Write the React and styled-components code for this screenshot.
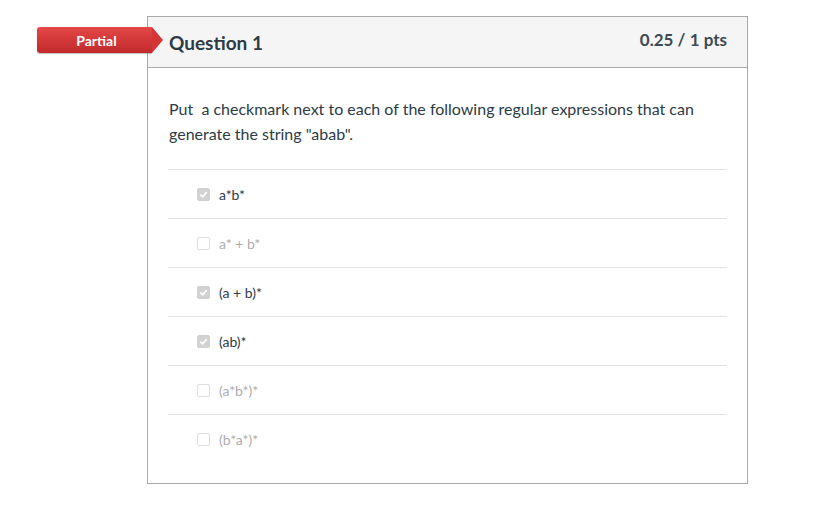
import React from 'react';
import styled, { createGlobalStyle } from 'styled-components';

const GlobalStyle = createGlobalStyle`
    body {
        margin: 0;
        background: #ffffff;
        font-family: Lato, "Open Sans", "Liberation Sans", sans-serif;
        color: #2d3b45;
    }
`;

const Page = styled.div`
    padding: 16px 0 0 147px;
`;

const Card = styled.div`
    position: relative;
    width: 599px;
    border: 1px solid #a8a8a8;
    background: #ffffff;
`;

const Badge = styled.div`
    position: absolute;
    left: -111px;
    top: 10px;
    width: 115px;
    height: 26px;
    display: flex;
    align-items: center;
    justify-content: center;
    padding-left: 4px;
    box-sizing: border-box;
    color: #ffffff;
    font-size: 14px;
    font-weight: 700;
    background: linear-gradient(#e44746, #c22a2c);
    border-radius: 3px 0 0 3px;
    box-shadow: 0 1px 1px rgba(0, 0, 0, 0.25);

    &::after {
        content: '';
        position: absolute;
        right: -11px;
        top: 0;
        border-top: 13px solid transparent;
        border-bottom: 13px solid transparent;
        border-left: 11px solid #d33636;
    }
`;

const Header = styled.div`
    display: flex;
    justify-content: space-between;
    align-items: flex-start;
    height: 50px;
    padding: 0 20px 0 21px;
    background: #f5f5f5;
    border-bottom: 1px solid #a8a8a8;
`;

const Title = styled.span`
    font-size: 19px;
    font-weight: 700;
    margin-top: 14px;
`;

const Points = styled.span`
    font-size: 17px;
    font-weight: 700;
    color: #3d4a53;
    margin-top: 12px;
`;

const Body = styled.div`
    padding: 28px 20px 20px 20px;
`;

const Prompt = styled.p`
    margin: 0 0 23px 1px;
    font-size: 16px;
    line-height: 25px;
`;

const Answer = styled.div`
    display: flex;
    align-items: center;
    height: 48px;
    border-top: 1px solid #e2e2e2;
    padding-left: 29px;
    gap: 9px;
    font-size: 14px;
    color: ${p => (p.checked ? '#2d3b45' : '#adadad')};
`;

const Box = styled.span`
    width: 13px;
    height: 13px;
    box-sizing: border-box;
    border-radius: 2px;
    border: 1px solid ${p => (p.checked ? '#cfcfcf' : '#dedede')};
    background: ${p => (p.checked ? '#d2d2d2' : '#ffffff')};
    display: flex;
    align-items: center;
    justify-content: center;
`;

const answers = [
    { label: 'a*b*', checked: true },
    { label: 'a* + b*', checked: false },
    { label: '(a + b)*', checked: true },
    { label: '(ab)*', checked: true },
    { label: '(a*b*)*', checked: false },
    { label: '(b*a*)*', checked: false },
];

const App = () => {
    return (
        <>
            <GlobalStyle />
            <Page>
                <Card>
                    <Badge>Partial</Badge>
                    <Header>
                        <Title>Question 1</Title>
                        <Points>0.25 / 1 pts</Points>
                    </Header>
                    <Body>
                        <Prompt>
                            Put&nbsp; a checkmark next to each of the following regular expressions that can generate the string "abab".
                        </Prompt>
                        {answers.map(a => (
                            <Answer key={a.label} checked={a.checked}>
                                <Box checked={a.checked}>
                                    {a.checked && (
                                        <svg width="9" height="9" viewBox="0 0 10 10">
                                            <path d="M1.5 5.2 L4 7.6 L8.6 2.4" fill="none" stroke="#ffffff" strokeWidth="1.8" />
                                        </svg>
                                    )}
                                </Box>
                                <span>{a.label}</span>
                            </Answer>
                        ))}
                    </Body>
                </Card>
            </Page>
        </>
    );
};

export default App;
